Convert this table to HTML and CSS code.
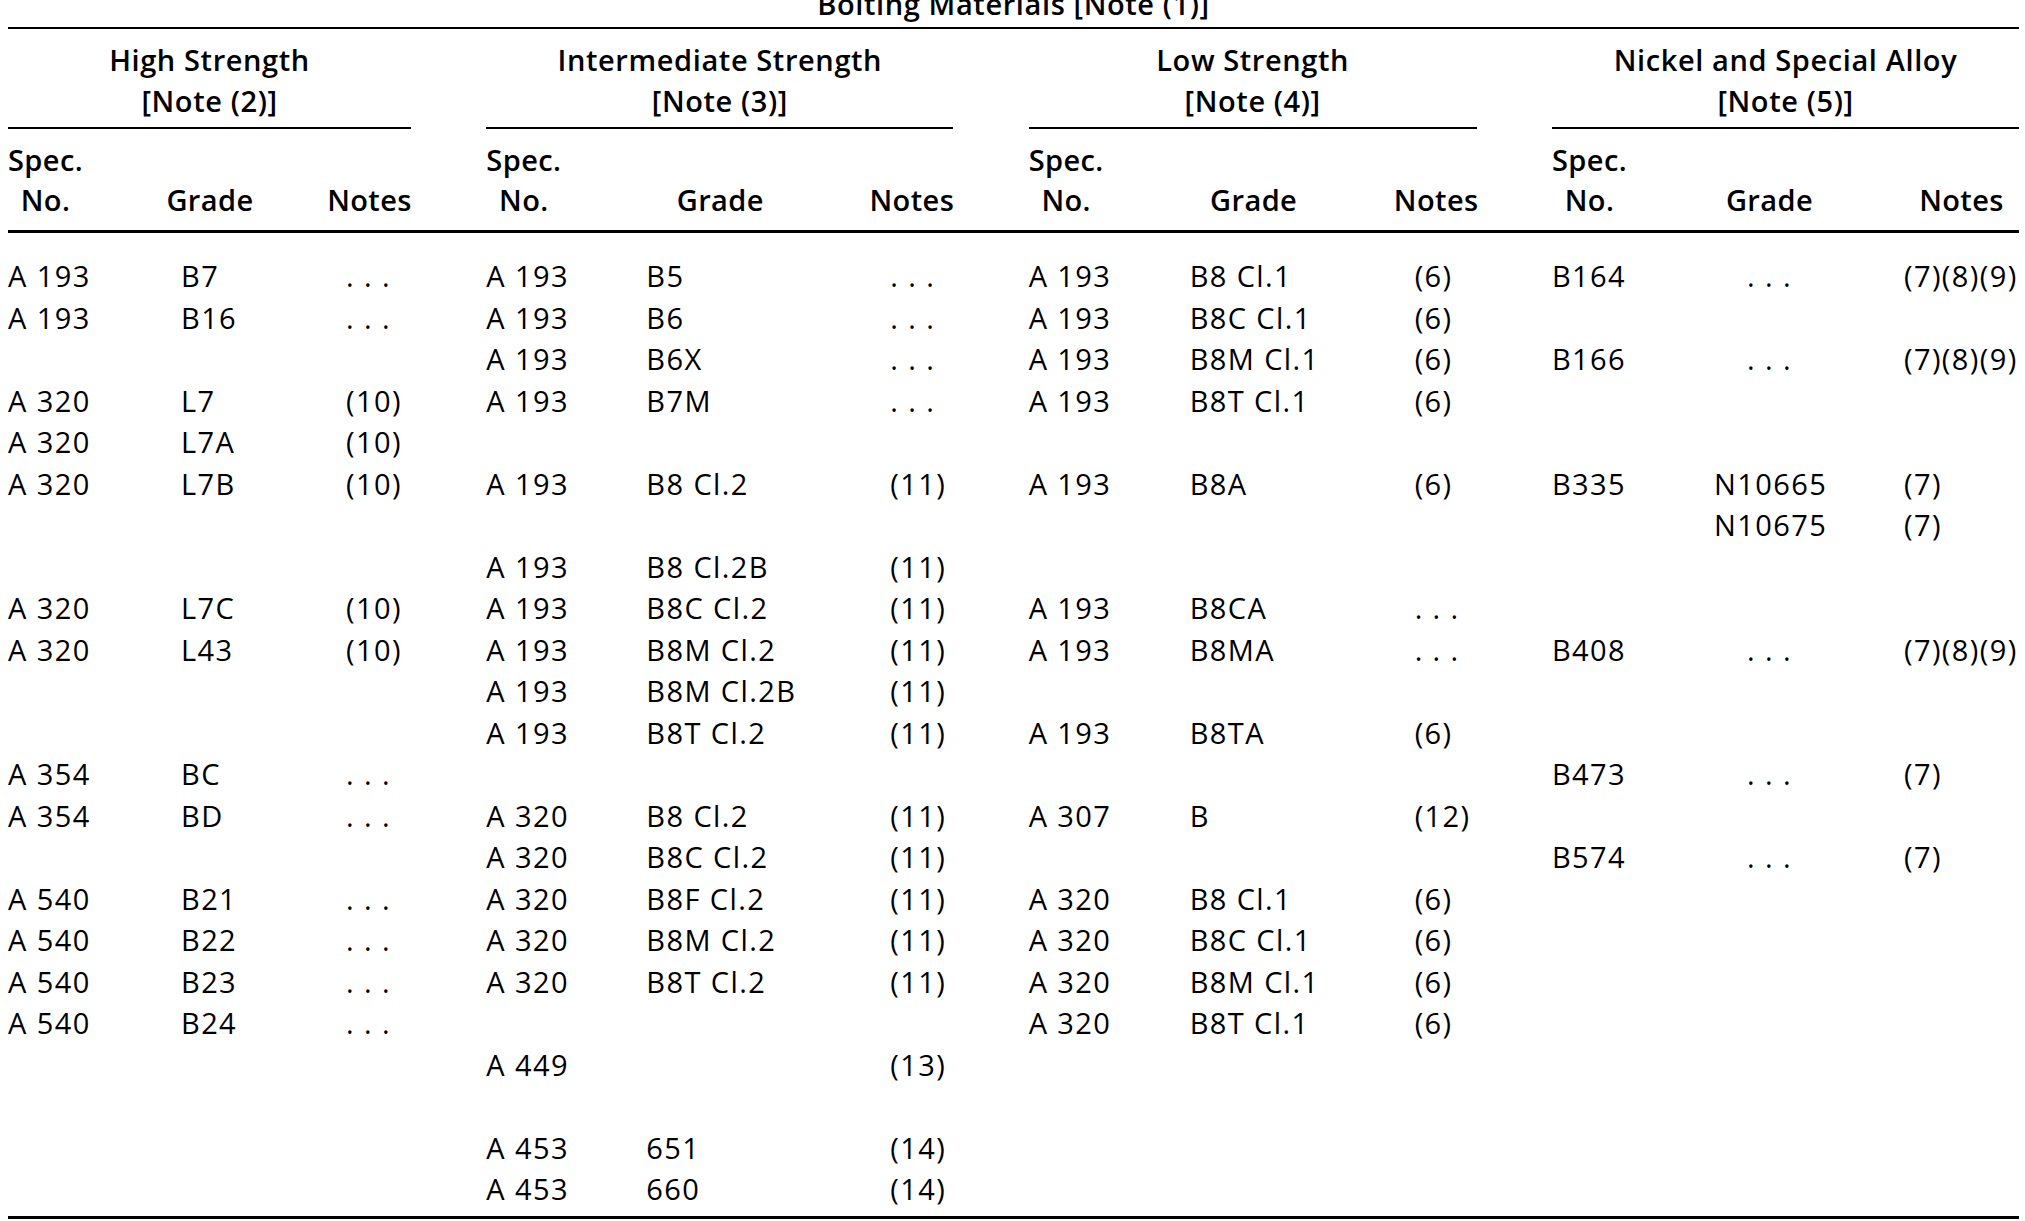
FILE: index.html
```html
<!DOCTYPE html>
<html lang="en">
<head>
<meta charset="utf-8">
<title>Bolting Materials</title>
<link rel="stylesheet" href="styles.css">
</head>
<body>
<div class="sheet">
  <div class="title">Bolting Materials [Note (1)]</div>
  <div class="table">
    <div class="group-heads">
      <div class="gh g1">High Strength<br>[Note (2)]</div>
      <div class="gh g2">Intermediate Strength<br>[Note (3)]</div>
      <div class="gh g3">Low Strength<br>[Note (4)]</div>
      <div class="gh g4">Nickel and Special Alloy<br>[Note (5)]</div>
    </div>
    <div class="col-heads">
      <div class="grid g1"><span class="ch-spec">Spec.<br>No.</span><span class="ch-grade"><span>Grade</span></span><span class="ch-notes"><span>Notes</span></span></div>
      <div class="grid g2"><span class="ch-spec">Spec.<br>No.</span><span class="ch-grade"><span>Grade</span></span><span class="ch-notes"><span>Notes</span></span></div>
      <div class="grid g3"><span class="ch-spec">Spec.<br>No.</span><span class="ch-grade"><span>Grade</span></span><span class="ch-notes"><span>Notes</span></span></div>
      <div class="grid g4"><span class="ch-spec">Spec.<br>No.</span><span class="ch-grade"><span>Grade</span></span><span class="ch-notes"><span>Notes</span></span></div>
    </div>
    <div class="body">
      <div class="grid rows g1">
        <span>A 193</span><span>B7</span><span class="n">. . .</span>
        <span>A 193</span><span>B16</span><span class="n">. . .</span>
        <span></span><span></span><span></span>
        <span>A 320</span><span>L7</span><span class="n">(10)</span>
        <span>A 320</span><span>L7A</span><span class="n">(10)</span>
        <span>A 320</span><span>L7B</span><span class="n">(10)</span>
        <span></span><span></span><span></span>
        <span></span><span></span><span></span>
        <span>A 320</span><span>L7C</span><span class="n">(10)</span>
        <span>A 320</span><span>L43</span><span class="n">(10)</span>
        <span></span><span></span><span></span>
        <span></span><span></span><span></span>
        <span>A 354</span><span>BC</span><span class="n">. . .</span>
        <span>A 354</span><span>BD</span><span class="n">. . .</span>
        <span></span><span></span><span></span>
        <span>A 540</span><span>B21</span><span class="n">. . .</span>
        <span>A 540</span><span>B22</span><span class="n">. . .</span>
        <span>A 540</span><span>B23</span><span class="n">. . .</span>
        <span>A 540</span><span>B24</span><span class="n">. . .</span>
      </div>
      <div class="grid rows g2">
        <span>A 193</span><span>B5</span><span class="n">. . .</span>
        <span>A 193</span><span>B6</span><span class="n">. . .</span>
        <span>A 193</span><span>B6X</span><span class="n">. . .</span>
        <span>A 193</span><span>B7M</span><span class="n">. . .</span>
        <span></span><span></span><span></span>
        <span>A 193</span><span>B8 Cl.2</span><span class="n">(11)</span>
        <span></span><span></span><span></span>
        <span>A 193</span><span>B8 Cl.2B</span><span class="n">(11)</span>
        <span>A 193</span><span>B8C Cl.2</span><span class="n">(11)</span>
        <span>A 193</span><span>B8M Cl.2</span><span class="n">(11)</span>
        <span>A 193</span><span>B8M Cl.2B</span><span class="n">(11)</span>
        <span>A 193</span><span>B8T Cl.2</span><span class="n">(11)</span>
        <span></span><span></span><span></span>
        <span>A 320</span><span>B8 Cl.2</span><span class="n">(11)</span>
        <span>A 320</span><span>B8C Cl.2</span><span class="n">(11)</span>
        <span>A 320</span><span>B8F Cl.2</span><span class="n">(11)</span>
        <span>A 320</span><span>B8M Cl.2</span><span class="n">(11)</span>
        <span>A 320</span><span>B8T Cl.2</span><span class="n">(11)</span>
        <span></span><span></span><span></span>
        <span>A 449</span><span></span><span class="n">(13)</span>
        <span></span><span></span><span></span>
        <span>A 453</span><span>651</span><span class="n">(14)</span>
        <span>A 453</span><span>660</span><span class="n">(14)</span>
      </div>
      <div class="grid rows g3">
        <span>A 193</span><span>B8 Cl.1</span><span class="n">(6)</span>
        <span>A 193</span><span>B8C Cl.1</span><span class="n">(6)</span>
        <span>A 193</span><span>B8M Cl.1</span><span class="n">(6)</span>
        <span>A 193</span><span>B8T Cl.1</span><span class="n">(6)</span>
        <span></span><span></span><span></span>
        <span>A 193</span><span>B8A</span><span class="n">(6)</span>
        <span></span><span></span><span></span>
        <span></span><span></span><span></span>
        <span>A 193</span><span>B8CA</span><span class="n">. . .</span>
        <span>A 193</span><span>B8MA</span><span class="n">. . .</span>
        <span></span><span></span><span></span>
        <span>A 193</span><span>B8TA</span><span class="n">(6)</span>
        <span></span><span></span><span></span>
        <span>A 307</span><span>B</span><span class="n">(12)</span>
        <span></span><span></span><span></span>
        <span>A 320</span><span>B8 Cl.1</span><span class="n">(6)</span>
        <span>A 320</span><span>B8C Cl.1</span><span class="n">(6)</span>
        <span>A 320</span><span>B8M Cl.1</span><span class="n">(6)</span>
        <span>A 320</span><span>B8T Cl.1</span><span class="n">(6)</span>
      </div>
      <div class="grid rows g4">
        <span>B164</span><span class="gc">. . .</span><span class="n">(7)(8)(9)</span>
        <span></span><span></span><span></span>
        <span>B166</span><span class="gc">. . .</span><span class="n">(7)(8)(9)</span>
        <span></span><span></span><span></span>
        <span></span><span></span><span></span>
        <span>B335</span><span>N10665</span><span class="n">(7)</span>
        <span></span><span>N10675</span><span class="n">(7)</span>
        <span></span><span></span><span></span>
        <span></span><span></span><span></span>
        <span>B408</span><span class="gc">. . .</span><span class="n">(7)(8)(9)</span>
        <span></span><span></span><span></span>
        <span></span><span></span><span></span>
        <span>B473</span><span class="gc">. . .</span><span class="n">(7)</span>
        <span></span><span></span><span></span>
        <span>B574</span><span class="gc">. . .</span><span class="n">(7)</span>
      </div>
    </div>
  </div>
</div>
</body>
</html>
```

FILE: styles.css
```css
html, body {
  margin: 0;
  padding: 0;
  background: #ffffff;
  overflow: hidden;
}

body {
  font-family: "Open Sans", "Noto Sans", sans-serif;
  color: #000000;
}

.sheet {
  margin-left: 8px;
  width: 2011px;
  font-size: 29px;
  letter-spacing: 1.4px;
}

.title {
  font-weight: 600;
  text-align: center;
  line-height: 41px;
  margin-top: -17px;
  margin-bottom: 3px;
  white-space: nowrap;
  letter-spacing: 0.6px;
}

.table {
  border-top: 2px solid #000;
  border-bottom: 3px solid #000;
}

.g1 { --c1: 173px; --c2: 147px; --c3: 83px; --gw: 58px; --np: 18px; width: 403px; }
.g2 { --c1: 160px; --c2: 224px; --c3: 83px; --gw: 148px; --np: 20px; width: 467px; }
.g3 { --c1: 161px; --c2: 206px; --c3: 81px; --gw: 128px; --np: 19px; width: 448px; }
.g4 { --c1: 162px; --c2: 190px; --c3: 115px; --gw: 111px; --np: 0px; width: 467px; }

.group-heads,
.col-heads,
.body {
  display: flex;
  justify-content: space-between;
}

.gh {
  font-weight: 600;
  text-align: center;
  line-height: 41px;
  padding-top: 10px;
  padding-bottom: 6px;
  border-bottom: 2px solid #000;
  white-space: nowrap;
  letter-spacing: 0.6px;
}

.grid {
  display: grid;
  grid-template-columns: var(--c1) var(--c2) var(--c3);
}

.col-heads {
  padding-top: 11px;
  padding-bottom: 10px;
  border-bottom: 3px solid #000;
}

.col-heads .grid {
  font-weight: 600;
  line-height: 40px;
  letter-spacing: 0.4px;
  align-items: end;
  white-space: nowrap;
}

.ch-spec {
  justify-self: start;
  text-align: center;
}

.ch-grade {
  justify-self: start;
  width: var(--gw);
  display: flex;
  justify-content: center;
}

.ch-notes {
  display: flex;
  justify-content: center;
}

.body {
  padding-top: 22px;
  padding-bottom: 6px;
}

.rows {
  grid-auto-rows: 41.5px;
  line-height: 41.5px;
  white-space: nowrap;
}

.n {
  padding-left: var(--np);
}

.gc {
  width: var(--gw);
  text-align: center;
}
```
